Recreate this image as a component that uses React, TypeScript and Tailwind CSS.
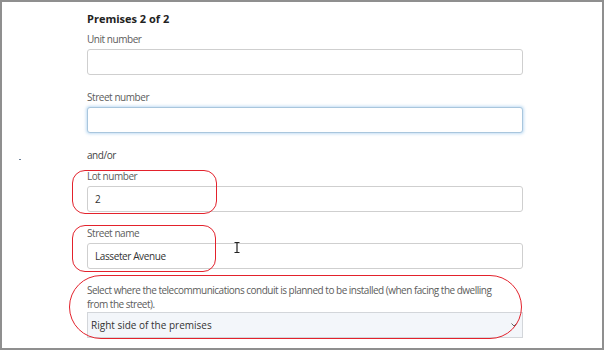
import React from 'react';

const font = { fontFamily: '"Open Sans", "Noto Sans", sans-serif' };

function Field({ label, value, focused }: { label: React.ReactNode; value?: string; focused?: boolean }) {
  return (
    <div className="flex flex-col">
      <label className="text-[10px] tracking-[-0.45px] leading-[14px] text-[#5c5c5c] mb-[3px]">{label}</label>
      <div
        className={`h-[26px] w-[436px] rounded-[3px] border bg-white flex items-center pl-[7px] text-[10px] tracking-[-0.4px] text-[#333] ${
          focused ? 'border-[#a9c6dd] shadow-[0_0_3px_1px_rgba(120,180,230,0.45)]' : 'border-[#cfcfcf]'
        }`}
      >
        {value}
      </div>
    </div>
  );
}

function IBeam() {
  return (
    <svg width="6" height="11" viewBox="0 0 6 11" className="absolute left-[232px] top-[240px]" aria-hidden="true">
      <path d="M0.5 0.5h5M3 0.5v10M0.5 10.5h5" stroke="#222" strokeWidth="1.2" fill="none" />
    </svg>
  );
}

export default function App() {
  return (
    <div style={font} className="relative w-[604px] h-[350px] overflow-hidden bg-white border-2 border-[#8f8f8f]">
      <div className="ml-[85px] pt-[10px] flex flex-col">
        <div className="text-[11px] leading-[14px] font-bold text-[#222] mb-[6px]">Premises 2 of 2</div>

        <Field label="Unit number" />
        <div className="mt-[15px]">
          <Field label="Street number" focused />
        </div>

        <div className="mt-[15px] text-[10px] tracking-[-0.45px] leading-[14px] text-[#444]">and/or</div>

        <div className="mt-[7px]">
          <Field label="Lot number" value="2" />
        </div>
        <div className="mt-[14px]">
          <Field label="Street name" value="Lasseter Avenue" />
        </div>

        <div className="mt-[14px] flex flex-col">
          <label className="text-[10px] tracking-[-0.5px] leading-[14px] text-[#5c5c5c] w-[436px] mb-px whitespace-nowrap">
            Select where the telecommunications conduit is planned to be installed (when facing the dwelling
            <br />
            from the street).
          </label>
          <div className="relative h-[26px] w-[436px] border border-[#d3d6da] bg-[#f3f6fa] flex items-center pl-[3px] text-[10px] text-[#333]">
            Right side of the premises
            <svg width="6" height="4" viewBox="0 0 6 4" className="absolute right-[5px] top-[10px]" aria-hidden="true">
              <path d="M0.5 0.5L3 3L5.5 0.5" stroke="#666" strokeWidth="1" fill="none" />
            </svg>
          </div>
        </div>
      </div>

      {/* annotations drawn on top of the form */}
      <div className="absolute left-[70px] top-[168px] w-[145px] h-[44px] rounded-[13px] border-[1.5px] border-[#e3222c]" />
      <div className="absolute left-[70px] top-[223px] w-[144px] h-[47px] rounded-[13px] border-[1.5px] border-[#e3222c]" />
      <div className="absolute left-[67px] top-[273px] w-[453px] h-[64px] rounded-[32px] border-[1.5px] border-[#e3222c]" />

      <IBeam />
      <div className="absolute left-[17px] top-[157px] w-[2px] h-px bg-[#6b7f99]" />
    </div>
  );
}
